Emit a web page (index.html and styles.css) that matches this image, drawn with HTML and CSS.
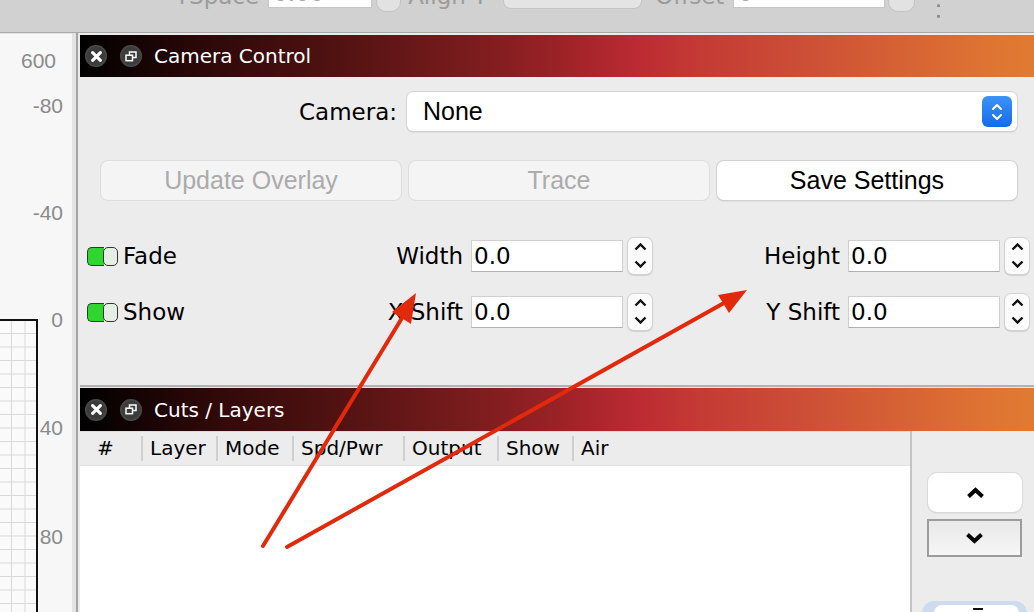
FILE: index.html
```html
<!DOCTYPE html>
<html>
<head>
    <title>Camera Control</title>
    <link rel="stylesheet" href="styles.css">
</head>
<body>
    <div class="toolbar">
        <div class="tb-row">
            <span class="tb-label">YSpace</span>
            <div class="tb-input">0.00</div>
            <div class="tb-spin"></div>
            <span class="tb-label tb-align">Align Y</span>
            <div class="tb-button"></div>
            <span class="tb-label tb-offset">Offset</span>
            <div class="tb-input tb-input-wide">0</div>
            <div class="tb-spin tb-spin-2"></div>
            <div class="tb-dots"></div>
        </div>
    </div>

    <div class="main">
        <div class="ruler">
            <span class="tick tick-x" style="top: 17px;">600</span>
            <span class="tick" style="top: 62px;">-80</span>
            <span class="tick" style="top: 169px;">-40</span>
            <span class="tick" style="top: 276px;">0</span>
            <div class="grid"></div>
            <span class="tick" style="top: 384px;">40</span>
            <span class="tick" style="top: 493px;">80</span>
        </div>
        <div class="splitter"></div>

        <div class="docks">
            <!-- camera dock -->
            <div class="dock-title">
                <span class="dock-btn">
                    <svg width="11" height="11" viewBox="0 0 10 10"><path d="M1.5 1.5 L8.5 8.5 M8.5 1.5 L1.5 8.5" stroke="#fff" stroke-width="2.8" stroke-linecap="round"/></svg>
                </span>
                <span class="dock-btn">
                    <svg width="12" height="11" viewBox="0 0 12 11"><rect x="4.5" y="1" width="6.5" height="5.5" fill="none" stroke="#fff" stroke-width="1.5"/><rect x="1" y="4.2" width="6.5" height="5.5" fill="#3c3c3c" stroke="#fff" stroke-width="1.5"/></svg>
                </span>
                <span class="dock-name">Camera Control</span>
            </div>
            <div class="camera-body">
                <div class="cam-row">
                    <span class="cam-label">Camera:</span>
                    <div class="combo">
                        <span class="combo-text">None</span>
                        <span class="combo-arrows">
                            <svg width="12" height="20" viewBox="0 0 12 20"><path d="M2 7 L6 3 L10 7 M2 13 L6 17 L10 13" fill="none" stroke="#fff" stroke-width="2" stroke-linecap="round" stroke-linejoin="round"/></svg>
                        </span>
                    </div>
                </div>

                <div class="btn-row">
                    <button class="btn" disabled>Update Overlay</button>
                    <button class="btn" disabled>Trace</button>
                    <button class="btn btn-active">Save Settings</button>
                </div>

                <div class="field-row">
                    <div class="check">
                        <span class="toggle"><span class="toggle-on"></span><span class="toggle-knob"></span></span>
                        <span>Fade</span>
                    </div>
                    <div class="field">
                        <span class="field-label">Width</span>
                        <div class="field-input">0.0</div>
                        <div class="spin">
                            <svg width="13" height="8" viewBox="0 0 13 8"><path d="M1.5 6.5 L6.5 1.5 L11.5 6.5" fill="none" stroke="#111" stroke-width="2.4"/></svg>
                            <svg width="13" height="8" viewBox="0 0 13 8"><path d="M1.5 1.5 L6.5 6.5 L11.5 1.5" fill="none" stroke="#111" stroke-width="2.4"/></svg>
                        </div>
                    </div>
                    <div class="field field-right">
                        <span class="field-label">Height</span>
                        <div class="field-input">0.0</div>
                        <div class="spin">
                            <svg width="13" height="8" viewBox="0 0 13 8"><path d="M1.5 6.5 L6.5 1.5 L11.5 6.5" fill="none" stroke="#111" stroke-width="2.4"/></svg>
                            <svg width="13" height="8" viewBox="0 0 13 8"><path d="M1.5 1.5 L6.5 6.5 L11.5 1.5" fill="none" stroke="#111" stroke-width="2.4"/></svg>
                        </div>
                    </div>
                </div>

                <div class="field-row">
                    <div class="check">
                        <span class="toggle"><span class="toggle-on"></span><span class="toggle-knob"></span></span>
                        <span>Show</span>
                    </div>
                    <div class="field">
                        <span class="field-label">X Shift</span>
                        <div class="field-input">0.0</div>
                        <div class="spin">
                            <svg width="13" height="8" viewBox="0 0 13 8"><path d="M1.5 6.5 L6.5 1.5 L11.5 6.5" fill="none" stroke="#111" stroke-width="2.4"/></svg>
                            <svg width="13" height="8" viewBox="0 0 13 8"><path d="M1.5 1.5 L6.5 6.5 L11.5 1.5" fill="none" stroke="#111" stroke-width="2.4"/></svg>
                        </div>
                    </div>
                    <div class="field field-right">
                        <span class="field-label">Y Shift</span>
                        <div class="field-input">0.0</div>
                        <div class="spin">
                            <svg width="13" height="8" viewBox="0 0 13 8"><path d="M1.5 6.5 L6.5 1.5 L11.5 6.5" fill="none" stroke="#111" stroke-width="2.4"/></svg>
                            <svg width="13" height="8" viewBox="0 0 13 8"><path d="M1.5 1.5 L6.5 6.5 L11.5 1.5" fill="none" stroke="#111" stroke-width="2.4"/></svg>
                        </div>
                    </div>
                </div>
            </div>

            <div class="dock-sep"></div>

            <!-- cuts dock -->
            <div class="dock-title dock-title-cuts">
                <span class="dock-btn">
                    <svg width="11" height="11" viewBox="0 0 10 10"><path d="M1.5 1.5 L8.5 8.5 M8.5 1.5 L1.5 8.5" stroke="#fff" stroke-width="2.8" stroke-linecap="round"/></svg>
                </span>
                <span class="dock-btn">
                    <svg width="12" height="11" viewBox="0 0 12 11"><rect x="4.5" y="1" width="6.5" height="5.5" fill="none" stroke="#fff" stroke-width="1.5"/><rect x="1" y="4.2" width="6.5" height="5.5" fill="#3c3c3c" stroke="#fff" stroke-width="1.5"/></svg>
                </span>
                <span class="dock-name">Cuts / Layers</span>
            </div>
            <div class="cuts-body">
                <div class="layers">
                    <div class="thead">
                        <span class="th th-num">#</span>
                        <span class="th th-layer">Layer</span>
                        <span class="th th-mode">Mode</span>
                        <span class="th th-spd">Spd/Pwr</span>
                        <span class="th th-out">Output</span>
                        <span class="th th-show">Show</span>
                        <span class="th th-air">Air</span>
                    </div>
                </div>
                <div class="side">
                    <button class="side-btn side-up">
                        <svg width="19" height="12" viewBox="0 0 19 12"><path d="M2.5 9.5 L9.5 3 L16.5 9.5" fill="none" stroke="#000" stroke-width="4"/></svg>
                    </button>
                    <button class="side-btn side-down">
                        <svg width="19" height="12" viewBox="0 0 19 12"><path d="M2.5 2.5 L9.5 9 L16.5 2.5" fill="none" stroke="#000" stroke-width="4"/></svg>
                    </button>
                    <div class="side-blue"><div class="side-blue-inner"><span class="side-glyph"></span></div></div>
                </div>
            </div>
        </div>
    </div>

    <svg class="annot" width="1034" height="612" viewBox="0 0 1034 612">
        <g stroke="#e2290c" stroke-width="4" stroke-linecap="round" fill="#e2290c">
            <line x1="263" y1="546" x2="402" y2="318"/>
            <polygon points="416,293 411,324 392,312" stroke="none"/>
            <line x1="287" y1="547" x2="724" y2="303"/>
            <polygon points="747,290 729,313 718,295" stroke="none"/>
        </g>
    </svg>
</body>
</html>
```

FILE: styles.css
```css
* {
    margin: 0;
    padding: 0;
    box-sizing: border-box;
}

body {
    width: 1034px;
    height: 612px;
    overflow: hidden;
    position: relative;
    background: #ececec;
    font-family: "DejaVu Sans", sans-serif;
    color: #000;
}

/* top toolbar, mostly scrolled out of view */
.toolbar {
    height: 33px;
    background: #d1d1d1;
    border-bottom: 1px solid #a8a8a8;
    overflow: hidden;
}

.tb-row {
    display: flex;
    align-items: flex-end;
    height: 20px;
    padding-left: 175px;
    color: #9c9c9c;
}

.tb-label {
    font-size: 23px;
    line-height: 23px;
    margin-bottom: 12px;
}

.tb-align { margin-left: 7px; }
.tb-offset { margin-left: 13px; }

.tb-input {
    width: 104px;
    height: 30px;
    margin-left: 9px;
    margin-bottom: 12px;
    background: #fff;
    border: 1px solid #c6c6c6;
    font-size: 23px;
    line-height: 28px;
    padding-left: 4px;
    color: #a4a4a4;
}

.tb-input-wide {
    width: 152px;
    margin-left: 9px;
}

.tb-spin {
    width: 25px;
    height: 34px;
    margin-left: 4px;
    margin-bottom: 8px;
    border-radius: 10px;
    background: #e2e2e2;
    border: 1px solid #c2c2c2;
}

.tb-spin-2 {
    width: 27px;
    margin-left: 3px;
}

.tb-button {
    width: 139px;
    height: 30px;
    margin-left: 16px;
    margin-bottom: 11px;
    border-radius: 8px;
    background: #e4e4e4;
    border: 1px solid #c4c4c4;
}

.tb-dots {
    width: 3px;
    height: 14px;
    margin-left: 22px;
    margin-bottom: 2px;
    border-radius: 2px;
    background: linear-gradient(#8e8e8e 0 3px, transparent 3px 11px, #8e8e8e 11px);
}

.main {
    display: flex;
    height: 579px;
}

/* vertical ruler + work area edge */
.ruler {
    width: 72px;
    position: relative;
    background: #f7f7f7;
    border-top: 1px solid #e4e4e4;
}

.tick {
    position: absolute;
    right: 9px;
    font-family: "Liberation Sans", sans-serif;
    font-size: 21px;
    line-height: 20px;
    color: #8a8a8a;
}

.tick-x { right: 16px; }

.grid {
    position: absolute;
    left: 0;
    top: 285px;
    width: 38px;
    bottom: 0;
    border-top: 2px solid #111;
    border-right: 2px solid #111;
    background-color: #fafafa;
    background-image:
        linear-gradient(to right, #d8d8d8 1px, transparent 1px),
        linear-gradient(to bottom, #d8d8d8 1px, transparent 1px);
    background-size: 13.5px 13.5px;
    background-position: -2.5px -1.5px;
}

.splitter {
    width: 8px;
    background: linear-gradient(to right, #e3e3e3 0 4px, #a4a4a4 4px 6px, #ebebeb 6px);
}

.docks {
    flex: 1;
    min-width: 0;
    display: flex;
    flex-direction: column;
    padding-top: 2px;
}

.dock-title {
    height: 42px;
    display: flex;
    align-items: center;
    padding-left: 5px;
    color: #fff;
    font-size: 20px;
    background: linear-gradient(to right,
        #000 0%, #2a0707 12%, #5a1414 30%, #7e1c1e 42%,
        #9a2226 50%, #bb2a32 58%, #c43a34 65%, #cc4d36 75%,
        #d66234 86%, #df7532 96%, #e07a31 100%);
}

.dock-title-cuts { height: 43px; }

.dock-btn {
    width: 22px;
    height: 22px;
    border-radius: 50%;
    display: flex;
    align-items: center;
    justify-content: center;
    background: radial-gradient(circle, #3c3c3c 0%, #3c3c3c 55%, #575757 78%, #2a2a2a 100%);
    margin-right: 13px;
}

.dock-name {
    margin-left: -1px;
}

/* camera control body */
.camera-body {
    height: 308px;
    background: #ececec;
}

.cam-row {
    display: flex;
    justify-content: flex-end;
    align-items: center;
    gap: 10px;
    padding: 15px 17px 0 0;
}

.cam-label {
    font-size: 23px;
}

.combo {
    width: 610px;
    height: 39px;
    background: #fff;
    border-radius: 6px;
    box-shadow: 0 0 0 1px #d4d4d4, 0 1px 1.5px rgba(0,0,0,0.25);
    display: flex;
    align-items: center;
    justify-content: space-between;
    padding: 0 5px 0 16px;
}

.combo-text {
    font-family: "Liberation Sans", sans-serif;
    font-size: 25px;
}

.combo-arrows {
    width: 30px;
    height: 31px;
    border-radius: 6px;
    background: linear-gradient(#3d92f8, #166be9);
    display: flex;
    align-items: center;
    justify-content: center;
}

.btn-row {
    display: flex;
    gap: 8px;
    padding: 0 17px 0 21px;
    margin-top: 30px;
}

.btn {
    flex: 1;
    height: 39px;
    border: none;
    border-radius: 7px;
    font-family: "Liberation Sans", sans-serif;
    font-size: 25px;
    background: #f4f4f4;
    color: #ababab;
    box-shadow: 0 0 0 1px #dddddd;
}

.btn-active {
    background: #fff;
    color: #000;
    box-shadow: 0 0 0 1px #d2d2d2, 0 1px 1.5px rgba(0,0,0,0.25);
}

.field-row {
    display: flex;
    align-items: center;
    height: 56px;
    padding-left: 7px;
}

.btn-row + .field-row { margin-top: 28px; }

.check {
    width: 300px;
    display: flex;
    align-items: center;
    gap: 5px;
    font-size: 23px;
}

.toggle {
    display: flex;
    width: 31px;
    height: 19px;
}

.toggle-on {
    width: 17px;
    height: 19px;
    background: #2fd62f;
    border: 1.5px solid #333;
    border-right: none;
    border-radius: 5px 0 0 5px;
}

.toggle-knob {
    width: 15px;
    height: 19px;
    margin-left: -1px;
    background: #e4eee4;
    border: 1.5px solid #333;
    border-radius: 5px;
}

.field {
    display: flex;
    align-items: center;
}

.field-right {
    margin-left: 108px;
}

.field-label {
    width: 76px;
    text-align: right;
    font-size: 23px;
    margin-right: 8px;
}

.field-right .field-label { width: 79px; }

.field-input {
    width: 152px;
    height: 32px;
    background: #fff;
    border: 1px solid #d0d0d0;
    border-bottom-color: #b0b0b0;
    font-size: 23px;
    line-height: 30px;
    padding-left: 2px;
}

.spin {
    width: 26px;
    height: 38px;
    margin-left: 4px;
    border-radius: 7px;
    background: #fbfbfb;
    border: 1px solid #d2d2d2;
    box-shadow: 0 1px 1px rgba(0,0,0,0.12);
    display: flex;
    flex-direction: column;
    align-items: center;
    justify-content: space-between;
    padding: 5px 0 6px;
}

.dock-sep {
    height: 3px;
    border-top: 2px solid #b2b2b2;
    background: #e6e6e6;
}

/* cuts / layers */
.cuts-body {
    flex: 1;
    display: flex;
    min-height: 0;
}

.layers {
    width: 832px;
    background: #fff;
    border-right: 2px solid #c4c4c4;
}

.thead {
    height: 35px;
    display: flex;
    align-items: center;
    background: #ececec;
    border-top: 1px solid #dcdcdc;
    border-bottom: 1px solid #e2e2e2;
    font-size: 20px;
}

.th {
    height: 25px;
    line-height: 25px;
    padding-left: 7px;
    border-left: 2px solid #cfcfcf;
}

.th-num { width: 61px; border-left: none; padding-left: 17px; }
.th-layer { width: 75px; }
.th-mode { width: 76px; }
.th-spd { width: 111px; }
.th-out { width: 94px; }
.th-show { width: 75px; }
.th-air { flex: 1; }

.side {
    flex: 1;
    background: #ececec;
    padding: 42px 0 0 16px;
}

.side-btn {
    display: flex;
    align-items: center;
    justify-content: center;
    width: 94px;
}

.side-up {
    height: 39px;
    border: none;
    border-radius: 9px;
    background: #fff;
    box-shadow: 0 0 0 1px #dadada, 0 1px 1.5px rgba(0,0,0,0.2);
}

.side-down {
    height: 38px;
    margin-top: 7px;
    margin-left: -1px;
    width: 95px;
    border: 2px solid #9c9c9c;
    background: linear-gradient(#e8e8e8, #f6f6f6);
}

.side-blue {
    width: 105px;
    height: 30px;
    margin: 44px 0 0 -6px;
    border-radius: 12px;
    background: #cddbee;
    padding: 4px 8px 0 12px;
}

.side-blue-inner {
    height: 30px;
    border-radius: 8px;
    background: #fff;
    display: flex;
    justify-content: center;
    padding-left: 2px;
}

.side-glyph {
    width: 10px;
    height: 2px;
    margin-top: 3px;
    background: #111;
}

/* annotation arrows drawn over the screenshot */
.annot {
    position: absolute;
    top: 0;
    left: 0;
    pointer-events: none;
}
```
